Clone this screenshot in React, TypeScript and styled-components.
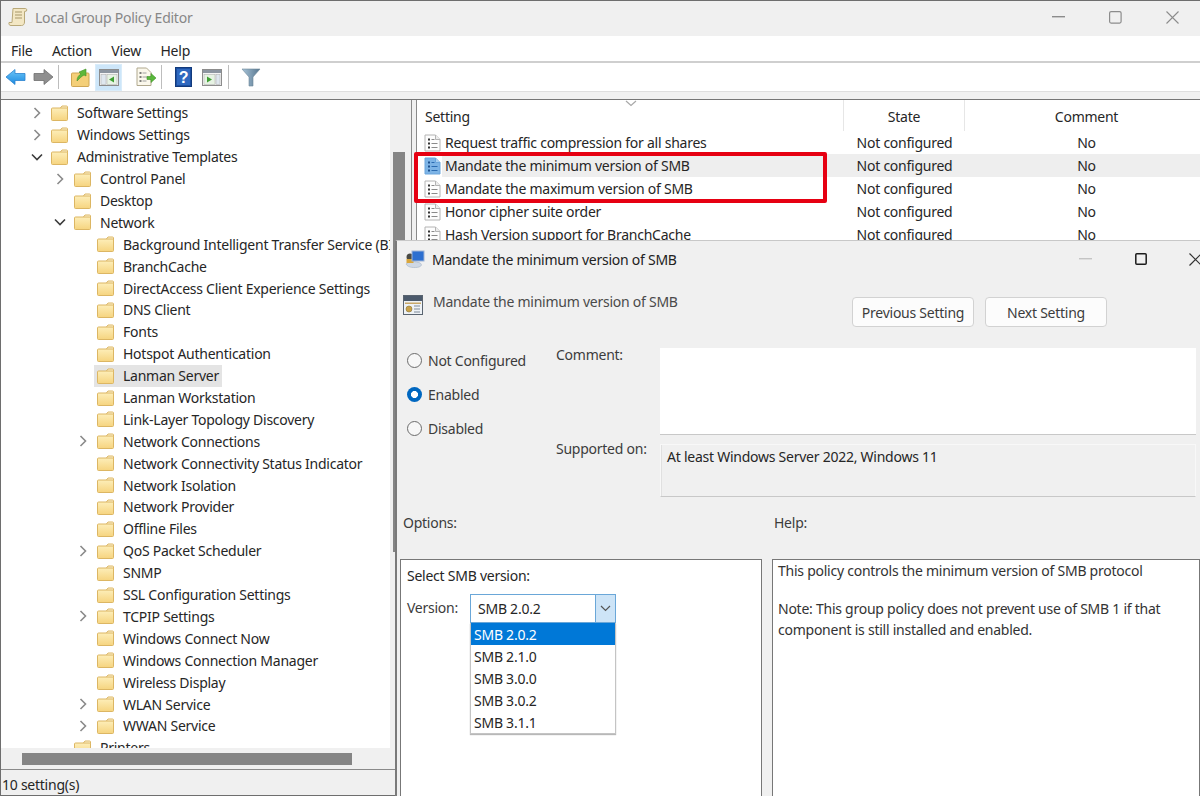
import styled, { createGlobalStyle } from "styled-components";

const GlobalStyle = createGlobalStyle`
  html, body {
    margin: 0;
    padding: 0;
    background: #fff;
  }
  * {
    box-sizing: border-box;
  }
`;

type TreeNode = {
  label: string;
  level: number;
  arrow?: "right" | "down";
  selected?: boolean;
};

const treeNodes: TreeNode[] = [
  { label: "Software Settings", level: 0, arrow: "right" },
  { label: "Windows Settings", level: 0, arrow: "right" },
  { label: "Administrative Templates", level: 0, arrow: "down" },
  { label: "Control Panel", level: 1, arrow: "right" },
  { label: "Desktop", level: 1 },
  { label: "Network", level: 1, arrow: "down" },
  { label: "Background Intelligent Transfer Service (BITS)", level: 2 },
  { label: "BranchCache", level: 2 },
  { label: "DirectAccess Client Experience Settings", level: 2 },
  { label: "DNS Client", level: 2 },
  { label: "Fonts", level: 2 },
  { label: "Hotspot Authentication", level: 2 },
  { label: "Lanman Server", level: 2, selected: true },
  { label: "Lanman Workstation", level: 2 },
  { label: "Link-Layer Topology Discovery", level: 2 },
  { label: "Network Connections", level: 2, arrow: "right" },
  { label: "Network Connectivity Status Indicator", level: 2 },
  { label: "Network Isolation", level: 2 },
  { label: "Network Provider", level: 2 },
  { label: "Offline Files", level: 2 },
  { label: "QoS Packet Scheduler", level: 2, arrow: "right" },
  { label: "SNMP", level: 2 },
  { label: "SSL Configuration Settings", level: 2 },
  { label: "TCPIP Settings", level: 2, arrow: "right" },
  { label: "Windows Connect Now", level: 2 },
  { label: "Windows Connection Manager", level: 2 },
  { label: "Wireless Display", level: 2 },
  { label: "WLAN Service", level: 2, arrow: "right" },
  { label: "WWAN Service", level: 2, arrow: "right" },
  { label: "Printers", level: 1 },
];

const settings = [
  "Request traffic compression for all shares",
  "Mandate the minimum version of SMB",
  "Mandate the maximum version of SMB",
  "Honor cipher suite order",
  "Hash Version support for BranchCache",
];

const versions = ["SMB 2.0.2", "SMB 2.1.0", "SMB 3.0.0", "SMB 3.0.2", "SMB 3.1.1"];

const FolderIcon = () => (
  <svg width="17" height="16" viewBox="0 0 17 16">
    <defs>
      <linearGradient id="folderFill" x1="0" y1="0" x2="0" y2="1">
        <stop offset="0" stopColor="#fdeeb9" />
        <stop offset="1" stopColor="#f6d47f" />
      </linearGradient>
    </defs>
    <path d="M9 3.5 11 1h4.5a1 1 0 0 1 1 1v2.5z" fill="#fdf3d2" stroke="#dcb663" />
    <rect x="0.5" y="3" width="16" height="12.5" rx="1" fill="url(#folderFill)" stroke="#dcb663" />
  </svg>
);

const Chevron = ({ dir }: { dir: "right" | "down" }) =>
  dir === "right" ? (
    <svg width="8" height="12" viewBox="0 0 8 12">
      <path d="M1.5 1 6.5 6l-5 5" fill="none" stroke="#8a8a8a" strokeWidth="1.6" />
    </svg>
  ) : (
    <svg width="12" height="8" viewBox="0 0 12 8">
      <path d="M1 1.5 6 6.5l5-5" fill="none" stroke="#3c3c3c" strokeWidth="1.6" />
    </svg>
  );

const PolicyIcon = ({ active }: { active?: boolean }) => (
  <svg width="17" height="18" viewBox="0 0 17 18">
    <path
      d="M1 1h10.5L16 5.5V17H1z"
      fill={active ? "#7db4e6" : "#fdfdfd"}
      stroke={active ? "#6aa5dc" : "#b4b4b4"}
    />
    <path d="M11.5 1v4.5H16" fill={active ? "#a9d0f2" : "#ececec"} stroke={active ? "#6aa5dc" : "#b4b4b4"} />
    <path d="M4 5.5h2M4 9.5h2M4 13.5h2" stroke={active ? "#1c4f8c" : "#333"} strokeWidth="2" />
    <path d="M7.5 5.5h3M7.5 9.5h6M7.5 13.5h6" stroke={active ? "#2b6bb0" : "#8a8a8a"} strokeWidth="1.2" />
  </svg>
);

const ScrollIcon = () => (
  <svg width="20" height="20" viewBox="0 0 20 20">
    <path d="M5 1.5h12.5c1 0 1.5 1 1 2.5l-2 .5V15c0 2-1 3.5-3 3.5H3c-1.5 0-2.5-1-2-3h3z" fill="#f3e7c4" stroke="#b8a878" />
    <path d="M7 5h7M7 8h7M7 11h7" stroke="#a8976a" strokeWidth="1.1" />
  </svg>
);

const BackIcon = () => (
  <svg width="21" height="18" viewBox="0 0 21 18">
    <defs>
      <linearGradient id="backFill" x1="0" y1="0" x2="0" y2="1">
        <stop offset="0" stopColor="#6cc6f7" />
        <stop offset="1" stopColor="#1c8ae0" />
      </linearGradient>
    </defs>
    <path d="M1 9 10 1.5V5.5h10V12.5H10V16.5z" fill="url(#backFill)" stroke="#2b83cf" strokeWidth="0.8" />
  </svg>
);

const ForwardIcon = () => (
  <svg width="21" height="18" viewBox="0 0 21 18">
    <path d="M20 9 11 1.5V5.5H1V12.5H11V16.5z" fill="#8f8f8f" stroke="#6f6f6f" strokeWidth="0.8" />
  </svg>
);

const UpFolderIcon = () => (
  <svg width="19" height="20" viewBox="0 0 19 20">
    <rect x="0.5" y="6" width="17.5" height="13.5" rx="1" fill="#f4cf78" stroke="#cfa653" />
    <path d="M6 14 C6 10 8 8 10 7 L8 5 15 2 15 9 13 8 C11 9 9 11 6 14z" fill="#5fb83a" stroke="#3f9226" strokeWidth="0.6" />
  </svg>
);

const PaneIcon = ({ flip }: { flip?: boolean }) => (
  <svg width="20" height="17" viewBox="0 0 20 17">
    <rect x="0.5" y="0.5" width="19" height="16" fill="#f4f4f4" stroke="#8c8c8c" />
    <rect x="1" y="1" width="18" height="3" fill="#8c95a0" />
    <rect x="2" y="5.5" width={flip ? 11 : 5} height="10" fill={flip ? "#e7f3e4" : "#dfe7ef"} stroke="#a8a8a8" strokeWidth="0.5" />
    <rect x={flip ? 14 : 8} y="5.5" width={flip ? 4 : 10} height="10" fill={flip ? "#dfe7ef" : "#e7f3e4"} stroke="#a8a8a8" strokeWidth="0.5" />
    {flip ? (
      <path d="M5 7.5 10 10.5 5 13.5z" fill="#3f9f33" />
    ) : (
      <path d="M15 7.5 10 10.5 15 13.5z" fill="#3f9f33" />
    )}
  </svg>
);

const ExportIcon = () => (
  <svg width="21" height="20" viewBox="0 0 21 20">
    <path d="M1 1h9.5L15 5.5V18.5H1z" fill="#fbf8ec" stroke="#b0a88e" />
    <path d="M3.5 6h2M3.5 10h2M3.5 14h2" stroke="#555" strokeWidth="1.5" />
    <path d="M6.5 6h4M6.5 10h5M6.5 14h4" stroke="#a0a0a0" />
    <path d="M11 9.5h4V6.5l5 4.5-5 4.5v-3h-4z" fill="#59b83c" stroke="#3f9226" strokeWidth="0.6" />
  </svg>
);

const HelpIcon = () => (
  <svg width="17" height="20" viewBox="0 0 17 20">
    <rect x="0.5" y="0.5" width="16" height="19" fill="#1c4fa0" stroke="#123a7c" />
    <rect x="2" y="2" width="13" height="16" fill="#2f68bf" />
    <text x="8.5" y="16" textAnchor="middle" fontFamily="Liberation Sans, sans-serif" fontWeight="700" fontSize="16" fill="#fff">?</text>
  </svg>
);

const FilterIcon = () => (
  <svg width="20" height="20" viewBox="0 0 20 20">
    <defs>
      <linearGradient id="funnelFill" x1="0" y1="0" x2="1" y2="0">
        <stop offset="0" stopColor="#a8c4d8" />
        <stop offset="1" stopColor="#56758e" />
      </linearGradient>
    </defs>
    <path d="M1 2h18l-7 8v9h-4v-9z" fill="url(#funnelFill)" stroke="#6d8699" strokeWidth="0.6" />
  </svg>
);

const ComputerIcon = () => (
  <svg width="20" height="20" viewBox="0 0 20 20">
    <path d="M1 15c3-3 10-3 14-1 2 1 2 3-1 4-4 1-11 1-13-3z" fill="#cfd8e4" stroke="#9fb0c4" strokeWidth="0.6" />
    <circle cx="5" cy="8" r="3.5" fill="#4a4a44" />
    <rect x="1.5" y="10" width="7" height="4" fill="#d9a63c" />
    <rect x="7" y="2" width="12" height="10" fill="#2c6fd0" stroke="#9fb4d4" />
  </svg>
);

const SettingIcon = () => (
  <svg width="20" height="20" viewBox="0 0 20 20">
    <rect x="0.5" y="0.5" width="19" height="19" fill="#eef2f6" stroke="#5a6470" />
    <rect x="1" y="1" width="18" height="5" fill="#4c5a6c" />
    <rect x="2" y="7.5" width="16" height="1.5" fill="#c8a86a" />
    <circle cx="6" cy="14" r="3" fill="#c9a24a" stroke="#8c7434" strokeWidth="0.6" />
    <path d="M11 11h6M11 14h6M11 17h6" stroke="#7f8a98" />
  </svg>
);

const Window = styled.div`
  position: relative;
  width: 1200px;
  height: 796px;
  overflow: hidden;
  display: flex;
  flex-direction: column;
  background: #fff;
  border-top: 1px solid #6e6e6e;
  border-left: 1px solid #6e6e6e;
  font-family: "Noto Sans", "Open Sans", sans-serif;
  font-size: 14px;
  letter-spacing: -0.25px;
  color: #262626;
`;

const TitleBar = styled.div`
  height: 35px;
  flex: none;
  display: flex;
  align-items: center;
  padding: 0 0 3px 7px;
  background: #f0f0f0;
`;

const AppTitle = styled.span`
  margin-left: 7px;
  color: #878787;
`;

const WindowControls = styled.div`
  margin-left: auto;
  margin-right: -1px;
  display: flex;
  align-items: center;
`;

const ControlButton = styled.div<{ $w: number }>`
  width: ${(p) => p.$w}px;
  display: flex;
  justify-content: center;
  align-items: center;
`;

const MenuBar = styled.div`
  height: 27px;
  flex: none;
  display: flex;
  align-items: center;
  gap: 19.5px;
  padding: 3px 0 0 10px;
  border-bottom: 2px solid #cfcfcf;
`;

const MenuItem = styled.span``;

const Toolbar = styled.div`
  height: 29px;
  flex: none;
  display: flex;
  align-items: center;
  border-bottom: 1px solid #dedede;
`;

const ToolSlot = styled.div<{ $w: number; $on?: boolean; $ml?: number }>`
  width: ${(p) => p.$w}px;
  height: 27px;
  margin-left: ${(p) => p.$ml ?? 0}px;
  display: flex;
  align-items: center;
  justify-content: center;
  background: ${(p) => (p.$on ? "#cde6f9" : "transparent")};
  border: 1px solid ${(p) => (p.$on ? "#d9ecfa" : "transparent")};
`;

const ToolSep = styled.div<{ $ml: number }>`
  width: 1px;
  height: 24px;
  margin: 0 6px 0 ${(p) => p.$ml}px;
  background: #bdbdbd;
`;

const Band = styled.div`
  height: 8px;
  flex: none;
  background: #f0f0f0;
  border-bottom: 1px solid #757575;
`;

const Body = styled.div`
  flex: 1;
  min-height: 0;
  display: flex;
  background: #f0f0f0;
`;

const TreePane = styled.div`
  width: 411px;
  flex: none;
  display: flex;
  border-right: 1px solid #8a8a8a;
`;

const TreeColumn = styled.div`
  flex: 1;
  min-width: 0;
  display: flex;
  flex-direction: column;
`;

const TreeScroll = styled.div`
  flex: 1;
  min-height: 0;
  overflow: hidden;
  padding-top: 2px;
  background: #fff;
`;

const TreeRow = styled.div<{ $level: number }>`
  height: 21.9px;
  display: flex;
  align-items: center;
  padding-left: ${(p) => 29 + p.$level * 23}px;
  white-space: nowrap;
`;

const ArrowSlot = styled.span`
  width: 14px;
  flex: none;
  display: flex;
  justify-content: center;
  margin-right: 4px;
`;

const NodeBody = styled.span<{ $selected?: boolean }>`
  height: 22px;
  display: inline-flex;
  align-items: center;
  gap: 9px;
  padding: 0 3px;
  background: ${(p) => (p.$selected ? "#e4e4e4" : "transparent")};
`;

const HScroll = styled.div`
  height: 21px;
  flex: none;
  display: flex;
  align-items: center;
  padding-left: 21px;
  background: #f0f0f0;
`;

const HThumb = styled.div`
  width: 330px;
  height: 12px;
  background: #858585;
`;

const VScroll = styled.div`
  width: 21px;
  flex: none;
  padding: 52px 0 0 3px;
  background: #f0f0f0;
`;

const VThumb = styled.div`
  width: 12px;
  height: 400px;
  background: #858585;
`;

const ListPane = styled.div`
  flex: 1;
  margin-left: 4px;
  background: #fff;
  border-left: 1px solid #8a8a8a;
  overflow: hidden;
`;

const ListHead = styled.div`
  height: 31px;
  display: grid;
  grid-template-columns: 427px 121px 1fr;
`;

const HeadCell = styled.div<{ $center?: boolean }>`
  position: relative;
  padding: 7px 0 0 ${(p) => (p.$center ? 0 : 8)}px;
  text-align: ${(p) => (p.$center ? "center" : "left")};
  border-right: 1px solid #e6e6e6;
  &:last-child {
    padding-left: 8px;
    border-right: none;
  }
`;

const SortCaret = styled.span`
  position: absolute;
  top: 0;
  left: 208px;
  display: flex;
`;

const ListRow = styled.div`
  height: 23px;
  display: flex;
  align-items: center;
`;

const RowIcon = styled.div`
  width: 25px;
  flex: none;
  padding-left: 7px;
  display: flex;
`;

const RowCells = styled.div<{ $active?: boolean }>`
  flex: 1;
  height: 100%;
  display: grid;
  grid-template-columns: 402px 121px 1fr;
  align-items: center;
  background: ${(p) => (p.$active ? "#eeeeee" : "transparent")};
`;

const RowName = styled.div`
  padding-left: 3px;
`;

const RowState = styled.div`
  text-align: center;
`;

const RowComment = styled.div`
  padding-left: 8px;
  text-align: center;
`;

const StatusBar = styled.div`
  height: 27px;
  flex: none;
  display: flex;
  align-items: center;
  padding: 3px 0 0 1px;
  background: #f0f0f0;
  border-top: 1px solid #8a8a8a;
  border-bottom: 1px solid #6e6e6e;
`;

const Callout = styled.div`
  position: absolute;
  top: 151px;
  left: 413px;
  width: 413px;
  height: 51px;
  border: 4px solid #e60012;
  border-radius: 2px;
`;

const Dialog = styled.div`
  position: absolute;
  top: 239px;
  left: 394px;
  width: 805px;
  height: 556px;
  overflow: hidden;
  display: flex;
  flex-direction: column;
  background: #f0f0f0;
  border-top: 1px solid #c8c8c8;
  border-left: 2px solid #7a7a7a;
`;

const DialogTitle = styled.div`
  height: 38px;
  flex: none;
  display: flex;
  align-items: center;
  padding: 0 0 2px 8px;
  gap: 7px;
  color: #222;
`;

const DialogControls = styled.div`
  margin-left: auto;
  margin-right: -23px;
  display: flex;
  align-items: center;
`;

const SettingBar = styled.div`
  height: 60px;
  flex: none;
  display: flex;
  align-items: flex-start;
  padding-left: 6px;
`;

const SettingIconSlot = styled.div`
  margin-top: 16px;
  display: flex;
`;

const SettingName = styled.div`
  margin: 13px 0 0 10px;
  width: 419px;
  color: #4a4a4a;
`;

const NavButton = styled.div`
  width: 122px;
  height: 30px;
  margin: 18px 11px 0 0;
  display: flex;
  align-items: center;
  justify-content: center;
  background: #fcfcfc;
  border: 1px solid #d2d2d2;
  border-radius: 4px;
  color: #3c3c3c;
`;

const PolicyRow = styled.div`
  height: 159px;
  flex: none;
  display: flex;
`;

const RadioColumn = styled.div`
  width: 159px;
  flex: none;
  padding: 4px 0 0 10px;
`;

const RadioRow = styled.div`
  height: 34px;
  display: flex;
  align-items: center;
  gap: 6px;
  color: #3c3c3c;
`;

const Radio = styled.span<{ $on?: boolean }>`
  width: 15px;
  height: 15px;
  border-radius: 50%;
  background: ${(p) => (p.$on ? "radial-gradient(circle, #fff 0 3.2px, #0067c0 3.8px)" : "#f7f7f7")};
  border: ${(p) => (p.$on ? "none" : "1.5px solid #6c6c6c")};
`;

const FieldGrid = styled.div`
  flex: 1;
  display: grid;
  grid-template-columns: 104px 1fr;
  grid-template-rows: 87px 53px;
  row-gap: 9px;
  padding: 9px 4px 0 0;
`;

const FieldLabel = styled.div<{ $up?: number }>`
  margin-top: ${(p) => -(p.$up ?? 0)}px;
  color: #3c3c3c;
  line-height: 14px;
`;

const CommentBox = styled.div`
  background: #fff;
  border-bottom: 1px solid #c8c8c8;
`;

const SupportedBox = styled.div`
  padding: 2px 6px;
  background: #f0f0f0;
  border: 1px solid #f8f8f8;
  border-bottom-color: #c8c8c8;
  box-shadow: inset 1px 0 #e0e0e0;
`;

const PaneLabels = styled.div`
  height: 61px;
  flex: none;
  display: flex;
  padding: 15px 0 0 6px;
  color: #3c3c3c;
`;

const OptionsLabel = styled.div`
  width: 371px;
`;

const Panes = styled.div`
  flex: 1;
  min-height: 0;
  display: flex;
  gap: 10px;
  padding-left: 3px;
`;

const PaneBox = styled.div<{ $w?: number }>`
  position: relative;
  flex: ${(p) => (p.$w ? `0 0 ${p.$w}px` : "1")};
  background: #fff;
  border: 1px solid #777;
  border-bottom: none;
`;

const OptionsBody = styled.div`
  padding: 6px 0 0 6px;
`;

const VersionRow = styled.div`
  display: flex;
  margin-top: 9px;
`;

const VersionLabel = styled.div`
  width: 63px;
  padding-top: 4px;
  color: #3c3c3c;
`;

const Combo = styled.div`
  position: relative;
  width: 146px;
  height: 29px;
  display: flex;
  align-items: center;
  padding-left: 7px;
  background: #fff;
  border: 1px solid #6aa7d8;
`;

const ComboArrow = styled.div`
  position: absolute;
  top: 0;
  right: 0;
  bottom: 0;
  width: 20px;
  display: flex;
  align-items: center;
  justify-content: center;
  background: #cde4f7;
  border-left: 1px solid #6aa7d8;
`;

const DropList = styled.div`
  position: absolute;
  top: 28px;
  left: -1px;
  width: 146px;
  height: 111px;
  background: #fff;
  border: 1px solid #c4c4c4;
  border-top: none;
  box-shadow: 0 1px 1px #b8b8b8;
`;

const DropItem = styled.div<{ $on?: boolean }>`
  height: 22px;
  padding-left: 3px;
  display: flex;
  align-items: center;
  background: ${(p) => (p.$on ? "#0078d7" : "transparent")};
  color: ${(p) => (p.$on ? "#fff" : "#262626")};
`;

const HelpBody = styled.div`
  padding: 0 0 0 5px;
  line-height: 21px;
  color: #333;
`;

const HelpNote = styled.div`
  margin-top: 17px;
`;

export default function App() {
  return (
    <>
      <GlobalStyle />
      <Window>
        <TitleBar>
          <ScrollIcon />
          <AppTitle>Local Group Policy Editor</AppTitle>
          <WindowControls>
            <ControlButton $w={57}>
              <svg width="13" height="2"><rect width="13" height="1.4" fill="#8c8c8c" /></svg>
            </ControlButton>
            <ControlButton $w={57}>
              <svg width="13" height="13"><rect x="0.6" y="0.6" width="11.5" height="11.5" rx="1.5" fill="none" stroke="#8c8c8c" strokeWidth="1.2" /></svg>
            </ControlButton>
            <ControlButton $w={57}>
              <svg width="13" height="13"><path d="M.5.5l12 12M12.5.5l-12 12" stroke="#8c8c8c" strokeWidth="1.1" /></svg>
            </ControlButton>
          </WindowControls>
        </TitleBar>
        <MenuBar>
          <MenuItem>File</MenuItem>
          <MenuItem>Action</MenuItem>
          <MenuItem>View</MenuItem>
          <MenuItem>Help</MenuItem>
        </MenuBar>
        <Toolbar>
          <ToolSlot $w={28}><BackIcon /></ToolSlot>
          <ToolSlot $w={28}><ForwardIcon /></ToolSlot>
          <ToolSep $ml={1} />
          <ToolSlot $w={30}><UpFolderIcon /></ToolSlot>
          <ToolSlot $w={27} $on><PaneIcon /></ToolSlot>
          <ToolSlot $w={30} $ml={9}><ExportIcon /></ToolSlot>
          <ToolSep $ml={0} />
          <ToolSlot $w={30}><HelpIcon /></ToolSlot>
          <ToolSlot $w={28}><PaneIcon flip /></ToolSlot>
          <ToolSep $ml={2} />
          <ToolSlot $w={32}><FilterIcon /></ToolSlot>
        </Toolbar>
        <Band />
        <Body>
          <TreePane>
            <TreeColumn>
              <TreeScroll>
                {treeNodes.map((node) => (
                  <TreeRow key={node.label} $level={node.level}>
                    <ArrowSlot>{node.arrow && <Chevron dir={node.arrow} />}</ArrowSlot>
                    <NodeBody $selected={node.selected}>
                      <FolderIcon />
                      {node.label}
                    </NodeBody>
                  </TreeRow>
                ))}
              </TreeScroll>
              <HScroll><HThumb /></HScroll>
            </TreeColumn>
            <VScroll><VThumb /></VScroll>
          </TreePane>
          <ListPane>
            <ListHead>
              <HeadCell>
                Setting
                <SortCaret>
                  <svg width="12" height="7"><path d="M1 1l5 4.5L11 1" fill="none" stroke="#a8a8a8" strokeWidth="1.2" /></svg>
                </SortCaret>
              </HeadCell>
              <HeadCell $center>State</HeadCell>
              <HeadCell $center>Comment</HeadCell>
            </ListHead>
            {settings.map((name, i) => (
              <ListRow key={name}>
                <RowIcon><PolicyIcon active={i === 1} /></RowIcon>
                <RowCells $active={i === 1}>
                  <RowName>{name}</RowName>
                  <RowState>Not configured</RowState>
                  <RowComment>No</RowComment>
                </RowCells>
              </ListRow>
            ))}
          </ListPane>
        </Body>
        <StatusBar>10 setting(s)</StatusBar>
        <Callout />
        <Dialog>
          <DialogTitle>
            <ComputerIcon />
            Mandate the minimum version of SMB
            <DialogControls>
              <ControlButton $w={55}>
                <svg width="13" height="2"><rect width="13" height="1.4" fill="#c4c4c4" /></svg>
              </ControlButton>
              <ControlButton $w={55}>
                <svg width="12" height="12"><rect x="0.8" y="0.8" width="10.4" height="10.4" rx="1" fill="none" stroke="#1c1c1c" strokeWidth="1.5" /></svg>
              </ControlButton>
              <ControlButton $w={55}>
                <svg width="13" height="13"><path d="M.5.5l12 12M12.5.5l-12 12" stroke="#333" strokeWidth="1.2" /></svg>
              </ControlButton>
            </DialogControls>
          </DialogTitle>
          <SettingBar>
            <SettingIconSlot><SettingIcon /></SettingIconSlot>
            <SettingName>Mandate the minimum version of SMB</SettingName>
            <NavButton>Previous Setting</NavButton>
            <NavButton>Next Setting</NavButton>
          </SettingBar>
          <PolicyRow>
            <RadioColumn>
              <RadioRow><Radio />Not Configured</RadioRow>
              <RadioRow><Radio $on />Enabled</RadioRow>
              <RadioRow><Radio />Disabled</RadioRow>
            </RadioColumn>
            <FieldGrid>
              <FieldLabel>Comment:</FieldLabel>
              <CommentBox />
              <FieldLabel $up={2}>Supported on:</FieldLabel>
              <SupportedBox>At least Windows Server 2022, Windows 11</SupportedBox>
            </FieldGrid>
          </PolicyRow>
          <PaneLabels>
            <OptionsLabel>Options:</OptionsLabel>
            <div>Help:</div>
          </PaneLabels>
          <Panes>
            <PaneBox $w={362}>
              <OptionsBody>
                Select SMB version:
                <VersionRow>
                  <VersionLabel>Version:</VersionLabel>
                  <Combo>
                    SMB 2.0.2
                    <ComboArrow>
                      <svg width="11" height="7"><path d="M1 1l4.5 4.5L10 1" fill="none" stroke="#555" strokeWidth="1.2" /></svg>
                    </ComboArrow>
                    <DropList>
                      {versions.map((v, i) => (
                        <DropItem key={v} $on={i === 0}>{v}</DropItem>
                      ))}
                    </DropList>
                  </Combo>
                </VersionRow>
              </OptionsBody>
            </PaneBox>
            <PaneBox>
              <HelpBody>
                This policy controls the minimum version of SMB protocol
                <HelpNote>
                  Note: This group policy does not prevent use of SMB 1 if that
                  <br />
                  component is still installed and enabled.
                </HelpNote>
              </HelpBody>
            </PaneBox>
          </Panes>
        </Dialog>
      </Window>
    </>
  );
}
